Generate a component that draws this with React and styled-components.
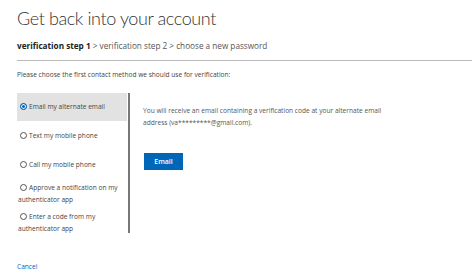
import React from 'react';
import styled, { createGlobalStyle } from 'styled-components';

const Global = createGlobalStyle`
  html, body {
    margin: 0;
    padding: 0;
    background: #fff;
  }
  body {
    font-family: "Open Sans", "Noto Sans", sans-serif;
    color: #333;
  }
`;

const Page = styled.div`
  width: 474px;
  height: 279px;
  padding-left: 17px;
  box-sizing: border-box;
  overflow: hidden;
`;

const Title = styled.h1`
  margin: 0;
  padding-top: 4px;
  font-family: "Lato", "Open Sans", sans-serif;
  font-size: 18px;
  letter-spacing: -0.4px;
  font-weight: 300;
  line-height: 28px;
  color: #333;
`;

const Crumbs = styled.div`
  margin-top: 7px;
  font-size: 8.2px;
  line-height: 14px;
  color: #555;
  padding-bottom: 7px;
  border-bottom: 1px solid #bbb;
  margin-right: 2px;

  b {
    color: #222;
    font-weight: 700;
  }
`;

const Intro = styled.p`
  margin: 8px 0 0;
  font-size: 6.6px;
  line-height: 12px;
  color: #444;
`;

const Panel = styled.div`
  display: flex;
  margin-top: 12px;
`;

const Options = styled.div`
  width: 113px;
  border-right: 2px solid #777;
  box-sizing: border-box;
  height: 140px;
`;

const Option = styled.label`
  display: flex;
  align-items: center;
  min-height: 24px;
  padding: 2px 2px 2px 1px;
  margin-top: ${({ first }) => (first ? '0' : '1px')};
  background: ${({ selected }) => (selected ? '#e2e2e2' : 'transparent')};
  margin-right: 1px;
  font-size: 6.6px;
  line-height: 12px;
  color: #444;
`;

const OptionText = styled.span`
  display: block;
`;

const Radio = styled.span`
  display: inline-block;
  width: 7px;
  height: 7px;
  border-radius: 50%;
  box-sizing: border-box;
  border: 1px solid ${({ checked }) => (checked ? '#0067b8' : '#555')};
  background: ${({ checked }) => (checked ? '#0067b8' : '#fff')};
  box-shadow: ${({ checked }) => (checked ? 'inset 0 0 0 1px #fff' : 'none')};
  vertical-align: -1px;
  margin-right: 2px;
  margin-left: 2px;
`;

const Detail = styled.div`
  padding: 12px 0 0 13px;
  width: 250px;
`;

const DetailText = styled.p`
  margin: 0;
  font-size: 6.6px;
  line-height: 12px;
  color: #555;
`;

const Button = styled.button`
  margin-top: 24px;
  margin-left: 1px;
  width: 39px;
  height: 17px;
  border: none;
  background: #0067b8;
  color: #fff;
  font-family: "Open Sans", sans-serif;
  font-size: 7px;
  font-weight: 600;
  padding: 0;
`;

const Cancel = styled.a`
  display: block;
  margin-top: 28px;
  font-size: 6.6px;
  line-height: 12px;
  color: #0067b8;
  text-decoration: none;
`;

const options = [
  'Email my alternate email',
  'Text my mobile phone',
  'Call my mobile phone',
  'Approve a notification on my authenticator app',
  'Enter a code from my authenticator app',
];

export default function App() {
  return (
    <Page>
      <Global />
      <Title>Get back into your account</Title>
      <Crumbs>
        <b>verification step 1</b> &gt; verification step 2 &gt; choose a new password
      </Crumbs>
      <Intro>Please choose the first contact method we should use for verification:</Intro>
      <Panel>
        <Options>
          {options.map((o, i) => (
            <Option key={o} first={i === 0} selected={i === 0}>
              <OptionText>
                <Radio checked={i === 0} />
                {o}
              </OptionText>
            </Option>
          ))}
        </Options>
        <Detail>
          <DetailText>
            You will receive an email containing a verification code at your alternate email
            address (va*********@gmail.com).
          </DetailText>
          <Button>Email</Button>
        </Detail>
      </Panel>
      <Cancel href="#">Cancel</Cancel>
    </Page>
  );
}
